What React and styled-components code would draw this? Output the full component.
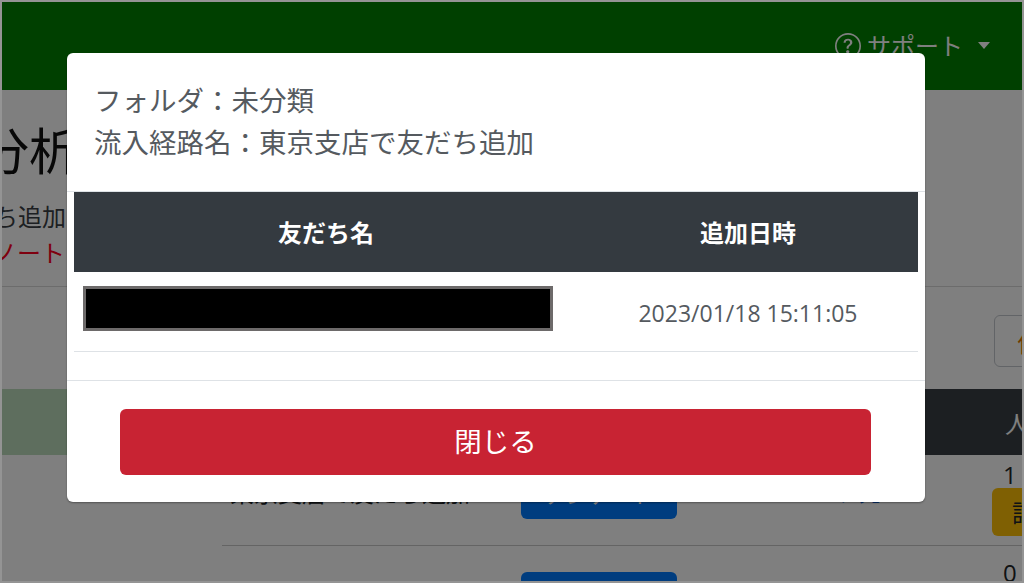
import React from 'react';
import styled, { createGlobalStyle } from 'styled-components';
import { BsQuestionCircle } from 'react-icons/bs';

const GlobalStyle = createGlobalStyle`
  html, body {
    margin: 0;
    padding: 0;
    background: #808080;
    overflow: hidden;
  }
  * {
    box-sizing: border-box;
  }
`;

const Frame = styled.div`
  position: relative;
  width: 1024px;
  height: 583px;
  border: 2px solid #949494;
  overflow: hidden;
  background: #fff;
  color: #212529;
  font-family: "Open Sans", "Noto Sans CJK JP", sans-serif;
  font-size: 24px;
`;

const Navbar = styled.header`
  height: 88px;
  padding-right: 32px;
  display: flex;
  align-items: center;
  justify-content: flex-end;
  background: #008000;
  color: #fff;
`;

const SupportMenu = styled.div`
  display: flex;
  align-items: center;
  gap: 6px;
  line-height: 36px;
  margin-top: -1px;
`;

const Caret = styled.span`
  margin-left: 9px;
  border-top: 7px solid #fff;
  border-left: 6.5px solid transparent;
  border-right: 6.5px solid transparent;
`;

const PageTitle = styled.h1`
  margin: 25px 0 12px -23px;
  font-size: 50px;
  font-weight: 400;
  line-height: 72px;
  color: #111;
`;

const SubLine = styled.div`
  margin-left: ${(props) => props.$indent}px;
  line-height: 36px;
  white-space: nowrap;
  color: ${(props) => props.$color || '#3a3f44'};
`;

const Divider = styled.hr`
  margin: 15px 0 0;
  border: 0;
  border-top: 1px solid #d8d8d8;
`;

const Toolbar = styled.div`
  margin-top: 28px;
  padding-left: 992px;
  display: flex;
`;

const OutlineButton = styled.div`
  flex: none;
  width: 120px;
  height: 52px;
  padding-left: 22px;
  display: flex;
  align-items: center;
  border: 1px solid #c4c9ce;
  border-radius: 6px;
  color: #e07b00;
  white-space: nowrap;
`;

const ListHead = styled.div`
  margin-top: 22px;
  height: 66px;
  display: grid;
  grid-template-columns: 220px 1fr;
`;

const HeadGreen = styled.div`
  background: #bcdcbc;
`;

const HeadDark = styled.div`
  padding-left: 783px;
  display: flex;
  align-items: center;
  background: #383f45;
  color: #fff;
  white-space: nowrap;
`;

const ListRow = styled.div`
  margin-left: 220px;
  height: 91px;
  display: grid;
  grid-template-columns: 299px 156px 116px 1fr;
  align-items: center;
  border-bottom: 1px solid #c8c8c8;
`;

const RowName = styled.div`
  padding-left: 8px;
  margin-top: -18px;
  white-space: nowrap;
`;

const SurveyButton = styled.div`
  height: 38px;
  padding-bottom: 14px;
  display: flex;
  align-items: center;
  justify-content: center;
  border-radius: 6px;
  background: #007bff;
  color: #fff;
  font-size: 22px;
`;

const RowLink = styled.div`
  padding-left: 116px;
  font-size: 22px;
  margin-top: -18px;
  color: #0a5bd0;
  white-space: nowrap;
`;

const CountCell = styled.div`
  padding-left: 199px;
  margin-top: ${(props) => (props.$single ? '-35px' : '-2px')};
  white-space: nowrap;
`;

const CountValue = styled.div`
  padding-left: 11px;
  line-height: 24px;
  margin-bottom: 1px;
`;

const DetailButton = styled.div`
  width: 90px;
  height: 48px;
  padding-left: 20px;
  display: flex;
  align-items: center;
  border-radius: 6px;
  background: #ffc107;
  color: #212529;
`;

const Backdrop = styled.div`
  position: absolute;
  inset: 0;
  background: rgba(0, 0, 0, 0.5);
`;

const Modal = styled.div`
  position: absolute;
  left: 65px;
  top: 51px;
  width: 858px;
  border-radius: 6px;
  background: #fff;
  color: #555a5f;
  box-shadow: 0 1px 2px rgba(0, 0, 0, 0.35);
`;

const ModalHeader = styled.div`
  padding: 25px 27px 28px;
  height: 139px;
  border-bottom: 1px solid #dee2e6;
  font-family: "Noto Sans CJK JP", sans-serif;
  font-size: 27.5px;
  line-height: 42px;
  white-space: nowrap;
`;

const ModalTable = styled.div`
  margin: 0 7px;
  display: grid;
  grid-template-columns: 504px 340px;
`;

const HeadCell = styled.div`
  height: 80px;
  padding-bottom: 2px;
  display: flex;
  align-items: center;
  justify-content: center;
  background: #343a40;
  color: #fff;
  font-family: "Noto Sans CJK JP", sans-serif;
  font-size: 24px;
  font-weight: 700;
`;

const BodyCell = styled.div`
  height: 80px;
  display: flex;
  align-items: center;
  justify-content: center;
  border-bottom: 1px solid #dee2e6;
`;

const NameCell = styled(BodyCell)`
  padding-left: 9px;
  justify-content: flex-start;
`;

const Redacted = styled.div`
  width: 470px;
  height: 45px;
  margin-top: -6px;
  border: 3px solid #6d6a6a;
  background: #000;
`;

const DateText = styled.span`
  font-family: "Open Sans", sans-serif;
  font-size: 23px;
  margin-top: 2px;
  white-space: nowrap;
`;

const ModalFooter = styled.div`
  margin-top: 28px;
  padding: 28px 54px 27px 53px;
  border-top: 1px solid #dee2e6;
`;

const CloseButton = styled.button`
  width: 100%;
  height: 66px;
  padding: 0 0 4px;
  border: 0;
  border-radius: 6px;
  background: #c82333;
  color: #fff;
  font-family: "Noto Sans CJK JP", sans-serif;
  font-size: 27.5px;
`;

// second row's labels sit below the crop in the reference, so only the first has them
const rows = [
  { id: 1, name: '東京支店で友だち追加', survey: 'アンケート', link: 'リンク先', count: '1' },
  { id: 2, count: '0' },
];

const App = () => (
  <Frame>
    <GlobalStyle />
    <Navbar>
      <SupportMenu>
        <BsQuestionCircle size={26} />
        サポート
        <Caret />
      </SupportMenu>
    </Navbar>
    <PageTitle>分析</PageTitle>
    <SubLine $indent={-56}>友だち追加</SubLine>
    <SubLine $indent={-9} $color="#ff0020">ノート</SubLine>
    <Divider />
    <Toolbar>
      <OutlineButton>作成</OutlineButton>
    </Toolbar>
    <ListHead>
      <HeadGreen />
      <HeadDark>人数</HeadDark>
    </ListHead>
    {rows.map((row) => (
      <ListRow key={row.id}>
        <RowName>{row.name}</RowName>
        <SurveyButton>{row.survey}</SurveyButton>
        <RowLink>{row.link}</RowLink>
        <CountCell $single={row.count === '0'}>
          <CountValue>{row.count}</CountValue>
          {row.count !== '0' && <DetailButton>詳細</DetailButton>}
        </CountCell>
      </ListRow>
    ))}
    <Backdrop />
    <Modal>
      <ModalHeader>
        <div>フォルダ：未分類</div>
        <div>流入経路名：東京支店で友だち追加</div>
      </ModalHeader>
      <ModalTable>
        <HeadCell>友だち名</HeadCell>
        <HeadCell>追加日時</HeadCell>
        <NameCell>
          <Redacted />
        </NameCell>
        <BodyCell>
          <DateText>2023/01/18 15:11:05</DateText>
        </BodyCell>
      </ModalTable>
      <ModalFooter>
        <CloseButton>閉じる</CloseButton>
      </ModalFooter>
    </Modal>
  </Frame>
);

export default App;
